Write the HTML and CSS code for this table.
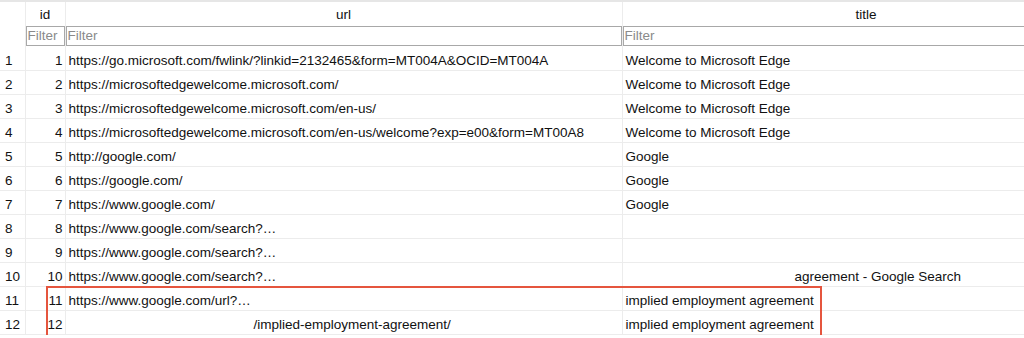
FILE: index.html
```html
<!DOCTYPE html>
<html lang="en">
<head>
  <meta charset="UTF-8" />
  <title>History table</title>
  <link rel="stylesheet" href="styles.css">
</head>
<body>
  <div class="grid-wrap">
    <table class="grid">
      <colgroup>
        <col class="col-row">
        <col class="col-id">
        <col class="col-url">
        <col class="col-title">
      </colgroup>
      <thead>
        <tr class="head-row">
          <th></th>
          <th>id</th>
          <th>url</th>
          <th>title</th>
        </tr>
        <tr class="filter-row">
          <th></th>
          <th><div class="filter">Filter</div></th>
          <th><div class="filter">Filter</div></th>
          <th><div class="filter">Filter</div></th>
        </tr>
      </thead>
      <tbody>
        <tr><td class="num">1</td><td class="id">1</td><td>https://go.microsoft.com/fwlink/?linkid=2132465&amp;form=MT004A&amp;OCID=MT004A</td><td>Welcome to Microsoft Edge</td></tr>
        <tr><td class="num">2</td><td class="id">2</td><td>https://microsoftedgewelcome.microsoft.com/</td><td>Welcome to Microsoft Edge</td></tr>
        <tr><td class="num">3</td><td class="id">3</td><td>https://microsoftedgewelcome.microsoft.com/en-us/</td><td>Welcome to Microsoft Edge</td></tr>
        <tr><td class="num">4</td><td class="id">4</td><td>https://microsoftedgewelcome.microsoft.com/en-us/welcome?exp=e00&amp;form=MT00A8</td><td>Welcome to Microsoft Edge</td></tr>
        <tr><td class="num">5</td><td class="id">5</td><td>http://google.com/</td><td>Google</td></tr>
        <tr><td class="num">6</td><td class="id">6</td><td>https://google.com/</td><td>Google</td></tr>
        <tr><td class="num">7</td><td class="id">7</td><td>https://www.google.com/</td><td>Google</td></tr>
        <tr><td class="num">8</td><td class="id">8</td><td>https://www.google.com/search?…</td><td></td></tr>
        <tr><td class="num">9</td><td class="id">9</td><td>https://www.google.com/search?…</td><td></td></tr>
        <tr><td class="num">10</td><td class="id">10</td><td>https://www.google.com/search?…</td><td class="shifted-title">agreement - Google Search</td></tr>
        <tr><td class="num">11</td><td class="id">11</td><td>https://www.google.com/url?…</td><td>implied employment agreement</td></tr>
        <tr><td class="num">12</td><td class="id">12</td><td class="shifted-url">/implied-employment-agreement/</td><td>implied employment agreement</td></tr>
      </tbody>
    </table>
    <div class="highlight"></div>
  </div>
</body>
</html>
```

FILE: styles.css
```css
body {
  margin: 0;
  overflow: hidden;
  background: #fff;
  font-family: "Liberation Sans", Arial, sans-serif;
  font-size: 13.5px;
  color: #111;
}

.grid-wrap {
  position: relative;
  width: 1110px;
  border-top: 2px solid #e6e6e6;
}

.grid {
  border-collapse: collapse;
  table-layout: fixed;
  width: 1110px;
}

.col-row { width: 25px; }
.col-id { width: 40px; }
.col-url { width: 557px; }
.col-title { width: 488px; }

.grid th,
.grid td {
  padding: 0 3px;
  border-right: 1px solid #ececec;
  white-space: nowrap;
  overflow: hidden;
  text-overflow: clip;
}

.head-row th {
  height: 24px;
  font-weight: normal;
  text-align: center;
}

.filter-row th {
  height: 21px;
  padding: 0;
  font-weight: normal;
  vertical-align: top;
}

.filter {
  height: 18px;
  line-height: 18px;
  border: 1px solid #a8a8a8;
  padding-left: 1px;
  color: #8a8a8a;
  text-align: left;
}

.grid tbody td {
  height: 20px;
  padding-top: 3px;
  border-bottom: 1px solid #ececec;
}

.grid td.num {
  padding-left: 5px;
}

.grid td.id {
  text-align: right;
  padding-right: 2px;
}

.grid td.shifted-title {
  padding-left: 172px;
}

.grid td.shifted-url {
  padding-left: 188px;
}

.highlight {
  position: absolute;
  left: 46px;
  top: 284px;
  width: 772px;
  height: 47px;
  border: 2px solid #e5553e;
}
```
